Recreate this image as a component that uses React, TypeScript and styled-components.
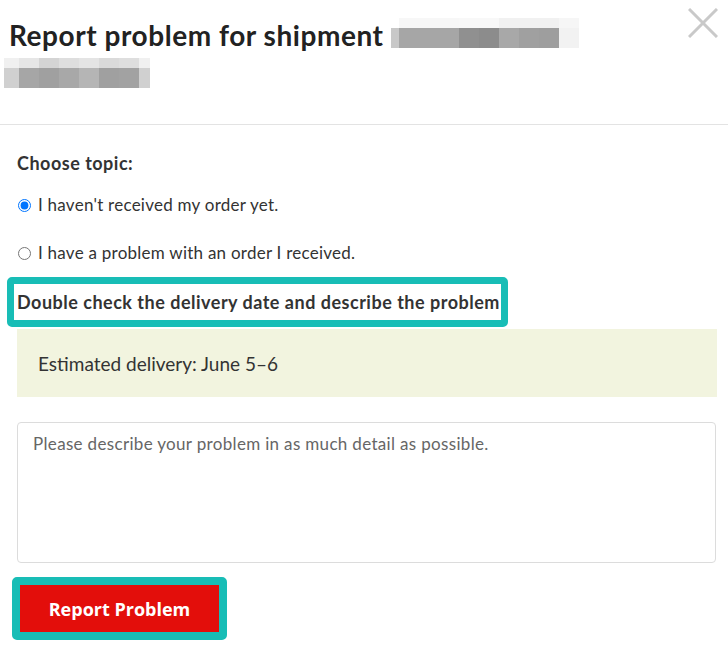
import * as React from "react";
import styled, { createGlobalStyle } from "styled-components";

const GlobalStyle = createGlobalStyle`
  html, body {
    margin: 0;
    padding: 0;
    background: #fff;
  }
  body {
    font-family: Lato, "Open Sans", sans-serif;
    color: #333;
  }
`;

const Colors = {
  title: "#222",
  text: "#333",
  muted: "#666",
  divider: "#e3e3e3",
  teal: "#18bdb6",
  red: "#e30e0b",
  beige: "#f2f4df",
  close: "#c9c9c9",
};

/* ── Header ── */

const Header = styled.header`
  display: flex;
  align-items: flex-start;
  padding: 8px 10px 29px 9px;
  border-bottom: 1px solid ${Colors.divider};
`;

const Title = styled.h1`
  flex: 1;
  margin: 0;
  padding-top: 7px;
  font-family: Lato, "Open Sans", sans-serif;
  font-weight: 700;
  font-size: 28px;
  letter-spacing: 0.55px;
  line-height: 40px;
  color: ${Colors.title};
`;

const Mosaic = styled.span<{ $shift?: number }>`
  display: inline-block;
  overflow: hidden;
  vertical-align: -2px;
  margin-left: ${(p) => p.$shift ?? 0}px;
`;

const MosaicRow = styled.span`
  display: flex;
`;

const Cell = styled.span<{ $w: number; $h: number; $c: string }>`
  display: block;
  width: ${(p) => p.$w}px;
  height: ${(p) => p.$h}px;
  background: ${(p) => p.$c};
`;

const CloseButton = styled.button`
  background: none;
  border: none;
  padding: 0;
  width: 30px;
  height: 30px;
  cursor: pointer;
  color: ${Colors.close};

  svg {
    display: block;
  }
`;

/* ── Body ── */

const Body = styled.main`
  padding: 27px 11px 8px 17px;
`;

const Label = styled.div`
  font-weight: 700;
  font-size: 18px;
  letter-spacing: 0.5px;
  line-height: 22px;
  color: ${Colors.text};
`;

const Options = styled.div`
  display: flex;
  flex-direction: column;
  gap: 26px;
  margin-top: 20px;
`;

const Option = styled.label`
  display: flex;
  align-items: center;
  font-size: 17px;
  letter-spacing: 0.25px;
  line-height: 22px;
  color: ${Colors.text};
  cursor: pointer;

  input {
    width: 13px;
    height: 13px;
    margin: 0 7px 0 1px;
  }
`;

const Highlight = styled.div<{ $border: number; $offset: number; $gap?: number }>`
  display: block;
  width: fit-content;
  margin-top: ${(p) => p.$gap ?? 0}px;
  margin-left: -${(p) => p.$offset}px;
  border: ${(p) => p.$border}px solid ${Colors.teal};
  border-radius: 5px;
  background: #fff;
`;

const SectionTitle = styled.div`
  font-weight: 700;
  font-size: 18px;
  letter-spacing: 0.5px;
  line-height: 22px;
  padding: 7px 1px 7px 3px;
  color: ${Colors.text};
`;

const Notice = styled.div`
  display: flex;
  align-items: center;
  height: 68px;
  margin-top: 2px;
  padding-left: 21px;
  background: ${Colors.beige};
  font-size: 19px;
  color: ${Colors.text};
`;

const TextArea = styled.textarea`
  display: block;
  box-sizing: border-box;
  width: calc(100% - 1px);
  height: 141px;
  margin-top: 25px;
  padding: 11px 15px;
  border: 1px solid #dcdcdc;
  border-radius: 4px;
  resize: none;
  font-family: Lato, "Open Sans", sans-serif;
  font-size: 17px;
  letter-spacing: 0.33px;
  line-height: 20px;
  color: ${Colors.text};

  &::placeholder {
    color: ${Colors.muted};
  }
`;

const ButtonWrap = styled.div`
  margin-top: 14px;
`;

const ReportButton = styled.button`
  display: block;
  width: 199px;
  height: 47px;
  border: none;
  background: ${Colors.red};
  color: #fff;
  font-family: "Open Sans", Lato, sans-serif;
  font-weight: 700;
  font-size: 18px;
  cursor: pointer;
`;

const topMosaic = [
  [
    { w: 8, c: "#ffffff" },
    { w: 60, c: "#f7f7f7" },
    { w: 40, c: "#f8f8f8" },
    { w: 60, c: "#f1f1f1" },
    { w: 20, c: "#f6f6f6" },
    { w: 20, c: "#ffffff" },
  ],
  [
    { w: 8, c: "#c8c8c8" },
    { w: 60, c: "#a6a6a6" },
    { w: 20, c: "#909090" },
    { w: 20, c: "#8c8c8c" },
    { w: 20, c: "#a8a8a8" },
    { w: 20, c: "#a0a0a0" },
    { w: 20, c: "#9e9e9e" },
    { w: 20, c: "#f2f2f2" },
  ],
];

const bottomMosaic = [
  [
    { w: 15, c: "#f0f0f0" },
    { w: 20, c: "#e6e6e6" },
    { w: 20, c: "#d4d4d4" },
    { w: 20, c: "#dedede" },
    { w: 20, c: "#e4e4e4" },
    { w: 20, c: "#dadada" },
    { w: 20, c: "#dedede" },
    { w: 11, c: "#f0f0f0" },
  ],
  [
    { w: 15, c: "#d0d0d0" },
    { w: 20, c: "#a6a6a6" },
    { w: 20, c: "#a0a0a0" },
    { w: 20, c: "#a8a8a8" },
    { w: 20, c: "#b5b5b5" },
    { w: 20, c: "#a0a0a0" },
    { w: 20, c: "#a2a2a2" },
    { w: 11, c: "#d0d0d0" },
  ],
];

const Redacted = ({ rows, shift }: { rows: { w: number; c: string }[][]; shift?: number }) => (
  <Mosaic $shift={shift} aria-hidden>
    {rows.map((row, i) => (
      <MosaicRow key={i}>
        {row.map((cell, j) => (
          <Cell key={j} $w={cell.w} $h={i === 0 ? 10 : 20} $c={cell.c} />
        ))}
      </MosaicRow>
    ))}
  </Mosaic>
);

const App = () => {
  const [topic, setTopic] = React.useState("not-received");

  return (
    <>
      <GlobalStyle />
      <Header>
        <Title>
          Report problem for shipment <Redacted rows={topMosaic} />
          <br />
          <Redacted rows={bottomMosaic} shift={-5} />
        </Title>
        <CloseButton aria-label="Close">
          <svg width="30" height="30" viewBox="0 0 30 30">
            <path d="M1 1 L29 29 M29 1 L1 29" stroke="currentColor" strokeWidth="3" />
          </svg>
        </CloseButton>
      </Header>
      <Body>
        <Label>Choose topic:</Label>
        <Options>
          <Option>
            <input
              type="radio"
              name="topic"
              checked={topic === "not-received"}
              onChange={() => setTopic("not-received")}
            />
            I haven't received my order yet.
          </Option>
          <Option>
            <input
              type="radio"
              name="topic"
              checked={topic === "problem"}
              onChange={() => setTopic("problem")}
            />
            I have a problem with an order I received.
          </Option>
        </Options>
        <Highlight $border={7} $offset={10} $gap={13}>
          <SectionTitle>Double check the delivery date and describe the problem</SectionTitle>
        </Highlight>
        <Notice>Estimated delivery: June 5–6</Notice>
        <TextArea placeholder="Please describe your problem in as much detail as possible." />
        <ButtonWrap>
          <Highlight $border={8} $offset={5}>
            <ReportButton>Report Problem</ReportButton>
          </Highlight>
        </ButtonWrap>
      </Body>
    </>
  );
};

export default App;
